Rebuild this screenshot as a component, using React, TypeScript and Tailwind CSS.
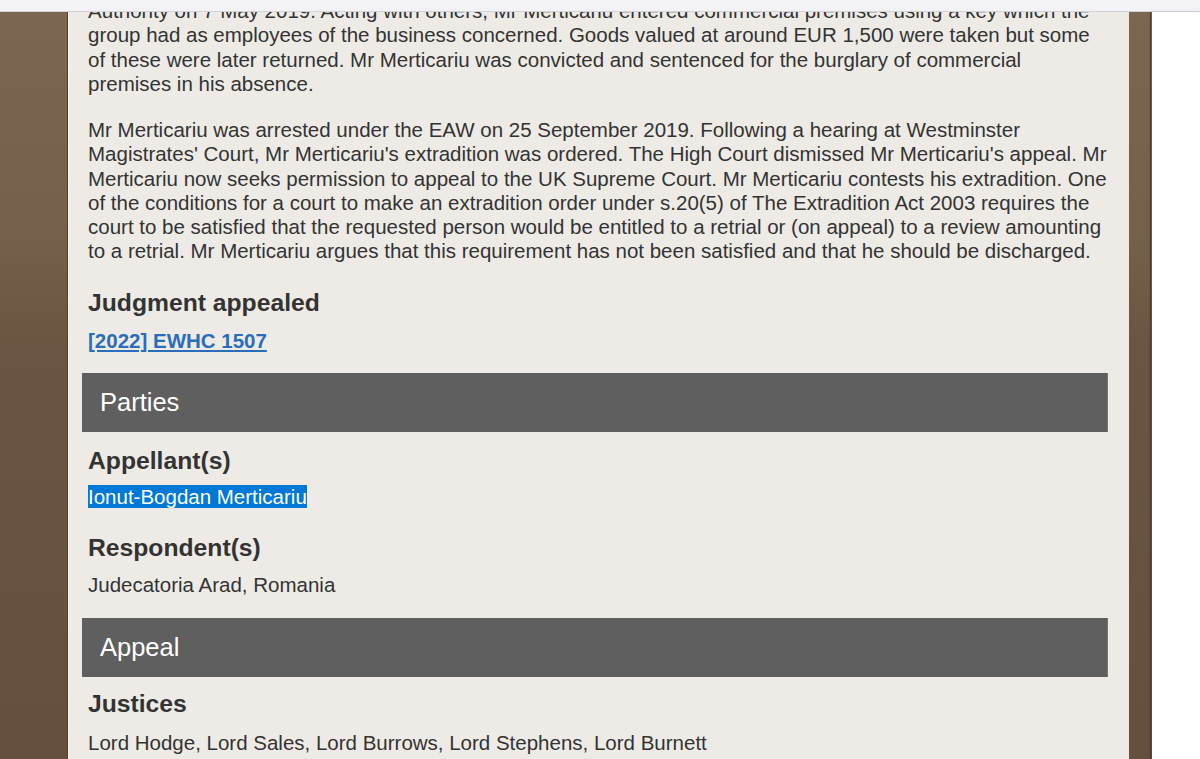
import React from "react";

const font = { fontFamily: '"Liberation Sans", Arial, sans-serif' };

const SectionBar = ({ title }: { title: string }) => (
  <div className="ml-[-6px] w-[1026px] h-[59px] bg-[#5f5f5f] border-r border-r-[#777] flex items-center px-[18px] text-[25.5px] text-white">
    {title}
  </div>
);

const Heading = ({ children }: { children: React.ReactNode }) => (
  <h3 className="text-[24.7px] font-bold leading-[30px] text-[#333]">{children}</h3>
);

const Lines = ({ lines, className }: { lines: string[]; className?: string }) => (
  <p className={"whitespace-nowrap " + (className || "")}>
    {lines.map((l, i) => (
      <React.Fragment key={i}>
        {l}
        {i < lines.length - 1 && <br />}
      </React.Fragment>
    ))}
  </p>
);

export default function App() {
  return (
    <div className="w-[1200px] h-[759px] overflow-hidden flex flex-col bg-white" style={font}>
      <div className="h-[12px] shrink-0 bg-[#f3f3f7] border-b border-b-[#d4d4d8]" />
      <div className="flex flex-1 min-h-0">
        <div className="flex flex-1 min-h-0 bg-[linear-gradient(180deg,#7b6651_0%,#74604b_30%,#6a5542_45%,#654f3d_100%)]">
          <div className="w-[68px] shrink-0 border-r border-r-[#4f3e30]" />
          <div className="w-[1061px] shrink-0 bg-[#eeebe6] border-l border-l-[#f7f5f1] overflow-hidden">
            <div className="mt-[-13px] pl-[19px] pr-[20px] text-[20.5px] leading-[24.25px] text-[#333]">
              <Lines
                lines={[
                  "Authority on 7 May 2019. Acting with others, Mr Merticariu entered commercial premises using a key which the",
                  "group had as employees of the business concerned. Goods valued at around EUR 1,500 were taken but some",
                  "of these were later returned. Mr Merticariu was convicted and sentenced for the burglary of commercial",
                  "premises in his absence.",
                ]}
              />
              <Lines
                className="mt-[22px]"
                lines={[
                  "Mr Merticariu was arrested under the EAW on 25 September 2019. Following a hearing at Westminster",
                  "Magistrates' Court, Mr Merticariu's extradition was ordered. The High Court dismissed Mr Merticariu's appeal. Mr",
                  "Merticariu now seeks permission to appeal to the UK Supreme Court. Mr Merticariu contests his extradition. One",
                  "of the conditions for a court to make an extradition order under s.20(5) of The Extradition Act 2003 requires the",
                  "court to be satisfied that the requested person would be entitled to a retrial or (on appeal) to a review amounting",
                  "to a retrial. Mr Merticariu argues that this requirement has not been satisfied and that he should be discharged.",
                ]}
              />
              <div className="mt-[24px]">
                <Heading>Judgment appealed</Heading>
              </div>
              <a href="#" className="block w-max mt-[11px] font-bold text-[#2a6ebb] underline leading-[24px]">
                [2022] EWHC 1507
              </a>
              <div className="mt-[20px]">
                <SectionBar title="Parties" />
              </div>
              <div className="mt-[14px]">
                <Heading>Appellant(s)</Heading>
              </div>
              <p className="mt-[9px] leading-[24px]">
                <span className="bg-[#0078d7] text-white">Ionut-Bogdan Merticariu</span>
              </p>
              <div className="mt-[24px]">
                <Heading>Respondent(s)</Heading>
              </div>
              <p className="mt-[10px] leading-[24px]">Judecatoria Arad, Romania</p>
              <div className="mt-[21px]">
                <SectionBar title="Appeal" />
              </div>
              <div className="mt-[12px]">
                <Heading>Justices</Heading>
              </div>
              <p className="mt-[12px] leading-[24px]">Lord Hodge, Lord Sales, Lord Burrows, Lord Stephens, Lord Burnett</p>
            </div>
          </div>
          <div className="w-[22px] shrink-0 border-r border-r-[#4f3e30]" />
        </div>
        <div className="w-[48px] shrink-0 bg-white shadow-[-2px_0_4px_rgba(0,0,0,0.08)]" />
      </div>
    </div>
  );
}
